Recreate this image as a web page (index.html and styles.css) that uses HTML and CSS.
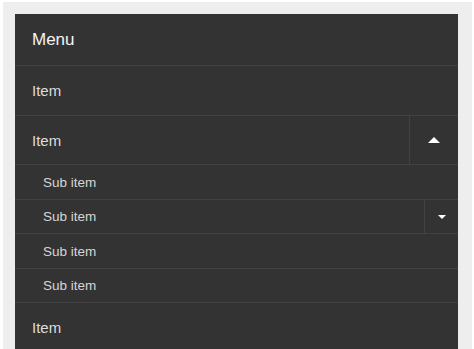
FILE: index.html
```html
<!DOCTYPE html>
<html>
<head>
<meta charset="utf-8">
<link rel="stylesheet" href="styles.css">
</head>
<body>
<div class="page">
  <nav class="menu">
    <div class="menu-head">Menu</div>
    <div class="row item h49"><span class="label">Item</span></div>
    <div class="row item h48">
      <span class="label">Item</span>
      <span class="toggle big"><span class="caret-up"></span></span>
    </div>
    <div class="row sub h34"><span class="label">Sub item</span></div>
    <div class="row sub h33">
      <span class="label">Sub item</span>
      <span class="toggle small"><span class="caret-down"></span></span>
    </div>
    <div class="row sub h34"><span class="label">Sub item</span></div>
    <div class="row sub h33"><span class="label">Sub item</span></div>
    <div class="row item h48 last"><span class="label">Item</span></div>
  </nav>
</div>
</body>
</html>
```
FILE: styles.css
```css
html, body {
  margin: 0;
  padding: 0;
  background: #ffffff;
  height: 100%;
  overflow: hidden;
}
.page {
  margin: 2px 2px 0 3px;
  background: #eeeeee;
  padding: 12px 14px 0 12px;
  height: calc(100vh - 14px);
  overflow: hidden;
}
.menu {
  background: #333333;
  font-family: "Liberation Sans", Arial, sans-serif;
  display: flex;
  flex-direction: column;
  height: 100%;
}
.menu-head {
  height: 51px;
  flex: none;
  border-bottom: 1px solid #424242;
  display: flex;
  align-items: center;
  padding-left: 17px;
  font-size: 17px;
  color: #f4f4f4;
}
.row {
  display: flex;
  flex: none;
  align-items: stretch;
  border-bottom: 1px solid #424242;
}
.row.last { border-bottom: none; }
.h48 { height: 48px; }
.h49 { height: 49px; }
.h33 { height: 33px; }
.h34 { height: 34px; }
.label {
  flex: 1;
  display: flex;
  align-items: center;
}
.item .label {
  padding-left: 17px;
  font-size: 15px;
  color: #dddddd;
}
.sub .label {
  padding-left: 28px;
  font-size: 13.5px;
  color: #d6d6d6;
}
.toggle {
  display: flex;
  align-items: center;
  justify-content: center;
  border-left: 1px solid #424242;
}
.toggle.big { width: 48px; }
.toggle.small { width: 33px; }
.caret-up {
  width: 0;
  height: 0;
  border-left: 6px solid transparent;
  border-right: 6px solid transparent;
  border-bottom: 6px solid #ffffff;
}
.caret-down {
  width: 0;
  height: 0;
  border-left: 4px solid transparent;
  border-right: 4px solid transparent;
  border-top: 4px solid #ffffff;
  margin-top: 1px;
}
```
